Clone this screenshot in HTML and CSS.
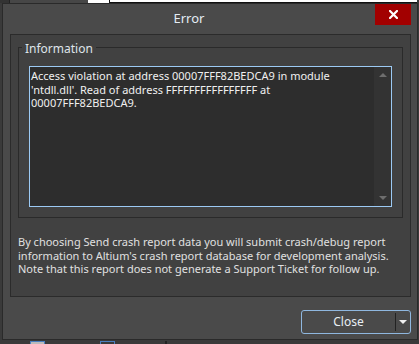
FILE: index.html
```html
<!DOCTYPE html>
<html lang="en">
<head>
  <meta charset="UTF-8">
  <title>Error</title>
  <link rel="stylesheet" href="styles.css">
</head>
<body>
  <div class="desk-top">
    <span class="dt-dark"></span>
    <span class="dt-gray"></span>
    <span class="dt-white"></span>
    <span class="dt-win"></span>
  </div>

  <div class="dialog">
    <div class="titlebar">
      <div class="title">Error</div>
      <button class="close-x">
        <svg viewBox="0 0 9 9" width="9" height="9">
          <path d="M1 1 L8 8 M8 1 L1 8" stroke="#fff" stroke-width="2.2" stroke-linecap="square"/>
        </svg>
      </button>
    </div>

    <div class="panel">
      <fieldset class="group">
        <legend>Information</legend>
        <div class="memo">
          <div class="memo-text">Access violation at address 00007FFF82BEDCA9 in module 'ntdll.dll'. Read of address FFFFFFFFFFFFFFFF at 00007FFF82BEDCA9.</div>
          <div class="memo-scroll">
            <span class="arrow up"></span>
            <span class="arrow down"></span>
          </div>
        </div>
      </fieldset>

      <p class="note">By choosing Send crash report data you will submit crash/debug report information to Altium's crash report database for development analysis. Note that this report does not generate a Support Ticket for follow up.</p>
    </div>

    <div class="footer">
      <div class="split-btn">
        <span class="btn-label">Close</span>
        <span class="btn-drop"><span class="caret"></span></span>
      </div>
    </div>
  </div>

  <div class="desk-bottom">
    <span class="db-a"></span>
    <span class="db-b"></span>
    <span class="db-c"></span>
  </div>
</body>
</html>
```

FILE: styles.css
```css
html, body {
  margin: 0;
  padding: 0;
}
body {
  width: 419px;
  height: 344px;
  overflow: hidden;
  background: #3a3a3a;
  font-family: "Noto Sans", "Open Sans", sans-serif;
  font-size: 11px;
  color: #e2e2e2;
}
.desk-top {
  display: flex;
  height: 3px;
}
.dt-dark {
  width: 9px;
  background: #333;
  border-right: 1px solid #222;
}
.dt-gray {
  width: 78px;
  background: #474747;
}
.dt-white {
  width: 21px;
  background: #fff;
}
.dt-win {
  width: 308px;
  background: #fff;
  border-left: 1px solid #111;
  border-bottom: 1px solid #111;
  box-sizing: border-box;
}

.dialog {
  margin-left: 2px;
  width: 416px;
  height: 337px;
  box-sizing: border-box;
  background: #4a4a4a;
  border: 1px solid #2a2a2a;
  display: flex;
  flex-direction: column;
}
.titlebar {
  height: 30px;
  display: flex;
  align-items: flex-start;
}
.title {
  flex: 1;
  text-align: center;
  font-size: 13px;
  line-height: 28px;
  color: #e4ecf4;
}
.close-x {
  width: 36px;
  height: 21px;
  margin-right: 6px;
  padding: 0;
  border: none;
  background: #a20000;
  display: flex;
  align-items: center;
  justify-content: center;
}
.close-x svg {
  display: block;
}

.panel {
  margin: 0 6px 0 7px;
  height: 263px;
  box-sizing: border-box;
  background: #414141;
  border: 1px solid #2b2b2b;
  padding: 3px 7px 0 7px;
}
.group {
  margin: 0;
  padding: 10px 10px 10px 10px;
  border: 1px solid #2a2a2a;
}
.group legend {
  padding: 4px 3px 0 3px;
  margin-left: -7px;
  font-size: 12px;
  line-height: 14px;
  color: #dfe4ea;
}
.memo {
  height: 141px;
  box-sizing: border-box;
  border: 1px solid #9ccaf4;
  background: #2d2d2d;
  display: flex;
}
.memo-text {
  flex: 1;
  padding: 2px 2px 0 1px;
  font-size: 11px;
  line-height: 13.5px;
  color: #f0f0f0;
}
.memo-scroll {
  width: 17px;
  background: #333;
  display: flex;
  flex-direction: column;
  justify-content: space-between;
  align-items: center;
  padding: 6px 0;
}
.arrow {
  width: 0;
  height: 0;
  border-left: 4px solid transparent;
  border-right: 4px solid transparent;
}
.arrow.up {
  border-bottom: 4px solid #6e6e6e;
}
.arrow.down {
  border-top: 4px solid #6e6e6e;
}

.note {
  margin: 17px 0 0 0;
  font-size: 11px;
  line-height: 13.5px;
  color: #e0e0e0;
}

.footer {
  display: flex;
  justify-content: flex-end;
  padding: 13px 6px 0 0;
}
.split-btn {
  width: 110px;
  height: 24px;
  box-sizing: border-box;
  border: 1px solid #8fb7df;
  border-radius: 3px;
  background: #4a4a4a;
  display: flex;
}
.btn-label {
  flex: 1;
  text-align: center;
  font-size: 12px;
  line-height: 22px;
  color: #e8eef4;
}
.btn-drop {
  width: 14px;
  border-left: 1px solid #222;
  margin: 2px 0;
  display: flex;
  align-items: center;
  justify-content: center;
}
.caret {
  width: 0;
  height: 0;
  border-left: 4px solid transparent;
  border-right: 4px solid transparent;
  border-top: 4px solid #f0f0f0;
}

.desk-bottom {
  display: flex;
  height: 5px;
  margin-top: 1px;
}
.db-a {
  width: 15px;
  margin-left: 30px;
  background: #bbb;
  border: 1px solid #4a7fc0;
  box-sizing: border-box;
}
.db-b {
  width: 15px;
  margin-left: 55px;
  border: 1px solid #4a7fc0;
  box-sizing: border-box;
}
.db-c {
  width: 2px;
  margin-left: 50px;
  background: #222;
}
```
